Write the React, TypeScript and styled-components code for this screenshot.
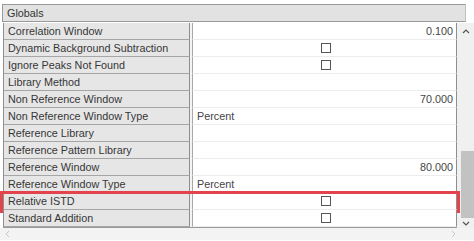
import React from "react";
import styled, { createGlobalStyle } from "styled-components";

const Global = createGlobalStyle`
  html, body { margin: 0; padding: 0; background: #ffffff; }
  body { font-family: "Liberation Sans", Arial, sans-serif; }
`;

const Panel = styled.div`
  width: 474px;
  height: 241px;
  background: #ffffff;
  display: flex;
  flex-direction: column;
  overflow: hidden;
  position: relative;
  font-size: 10.8px;
  color: #363636;
`;

const Header = styled.div`
  margin: 4px 0 0 2px;
  width: 464px;
  height: 18px;
  box-sizing: border-box;
  background: #e2e2e2;
  border: 1px solid #9a9a9a;
  border-right-color: #c0c0c0;
  padding-left: 4px;
  line-height: 17px;
  color: #333;
`;

const Body = styled.div`
  display: flex;
  height: 205px;
  margin-top: 1px;
`;

const Grid = styled.div`
  display: flex;
  flex-direction: column;
  margin-left: 3px;
  width: 454px;
  border-bottom: 1px solid #9a9a9a;
  box-sizing: border-box;
`;

const Row = styled.div<{ $highlight?: boolean }>`
  display: flex;
  height: 17px;
  position: relative;
  &::after {
    content: "";
    display: ${(p) => (p.$highlight ? "block" : "none")};
    position: absolute;
    left: -3px;
    right: -3px;
    top: -2px;
    bottom: -3px;
    border: 3px solid #e2434d;
    pointer-events: none;
  }
`;

const LabelCell = styled.div`
  width: 187px;
  box-sizing: border-box;
  background: #e6e6e6;
  border-left: 1px solid #8e8e8e;
  border-right: 1px solid #8e8e8e;
  border-bottom: 1px solid #a6a6a6;
  padding-left: 4px;
  line-height: 16px;
  white-space: nowrap;
  overflow: hidden;
`;

const Spacer = styled.div`
  width: 2px;
  background: #f4f4f4;
`;

const ValueCell = styled.div<{ $align?: "left" | "right" | "center" }>`
  flex: 1;
  box-sizing: border-box;
  background: #ffffff;
  border-left: 1px solid #a8a8a8;
  border-right: 1px solid #8e8e8e;
  border-bottom: 1px solid #ececec;
  display: flex;
  align-items: center;
  justify-content: ${(p) =>
    p.$align === "right" ? "flex-end" : p.$align === "center" ? "center" : "flex-start"};
  padding: 0 3px 0 4px;
  line-height: 16px;
  color: #444;
`;

const Check = styled.span`
  width: 10px;
  height: 10px;
  box-sizing: border-box;
  border: 1px solid #555;
  background: #fff;
  margin-left: 2px;
`;

const VScroll = styled.div`
  width: 17px;
  background: #f0f0f0;
  display: flex;
  flex-direction: column;
  align-items: center;
`;

const Arrow = styled.div<{ $h: number }>`
  height: ${(p) => p.$h}px;
  display: flex;
  align-items: center;
  justify-content: center;
  color: #555;
`;

const Track = styled.div`
  flex: 1;
  width: 100%;
  display: flex;
  flex-direction: column;
  justify-content: flex-end;
  align-items: flex-end;
  padding-bottom: 1px;
`;

const Thumb = styled.div`
  width: 13px;
  height: 67px;
  background: #c2c2c2;
`;

const HScroll = styled.div`
  height: 12px;
  background: #f3f3f3;
  display: flex;
  align-items: center;
  justify-content: space-between;
  padding: 0 18px 0 5px;
  color: #c8c8c8;
`;

type Item = { label: string; value?: string; kind?: "num" | "text" | "check" };

const items: Item[] = [
  { label: "Correlation Window", value: "0.100", kind: "num" },
  { label: "Dynamic Background Subtraction", kind: "check" },
  { label: "Ignore Peaks Not Found", kind: "check" },
  { label: "Library Method" },
  { label: "Non Reference Window", value: "70.000", kind: "num" },
  { label: "Non Reference Window Type", value: "Percent", kind: "text" },
  { label: "Reference Library" },
  { label: "Reference Pattern Library" },
  { label: "Reference Window", value: "80.000", kind: "num" },
  { label: "Reference Window Type", value: "Percent", kind: "text" },
  { label: "Relative ISTD", kind: "check" },
  { label: "Standard Addition", kind: "check" },
];

const Up = () => (
  <svg width="8" height="5" viewBox="0 0 8 5">
    <path d="M1 4 L4 1 L7 4" fill="none" stroke="#555" strokeWidth="1.2" />
  </svg>
);
const Down = () => (
  <svg width="8" height="5" viewBox="0 0 8 5">
    <path d="M1 1 L4 4 L7 1" fill="none" stroke="#555" strokeWidth="1.2" />
  </svg>
);
const Left = () => (
  <svg width="5" height="8" viewBox="0 0 5 8">
    <path d="M4 1 L1 4 L4 7" fill="none" stroke="#c8c8c8" strokeWidth="1" />
  </svg>
);
const Right = () => (
  <svg width="5" height="8" viewBox="0 0 5 8">
    <path d="M1 1 L4 4 L1 7" fill="none" stroke="#c8c8c8" strokeWidth="1" />
  </svg>
);

export default function App() {
  return (
    <>
      <Global />
      <Panel>
        <Header>Globals</Header>
        <Body>
          <Grid>
            {items.map((it) => (
              <Row key={it.label} $highlight={it.label === "Relative ISTD"}>
                <LabelCell>{it.label}</LabelCell>
                <Spacer />
                <ValueCell
                  $align={it.kind === "num" ? "right" : it.kind === "check" ? "center" : "left"}
                >
                  {it.kind === "check" ? <Check /> : it.value}
                </ValueCell>
              </Row>
            ))}
          </Grid>
          <VScroll>
            <Arrow $h={16}>
              <Up />
            </Arrow>
            <Track>
              <Thumb />
            </Track>
            <Arrow $h={9}>
              <Down />
            </Arrow>
          </VScroll>
        </Body>
        <HScroll>
          <Left />
          <Right />
        </HScroll>
      </Panel>
    </>
  );
}
